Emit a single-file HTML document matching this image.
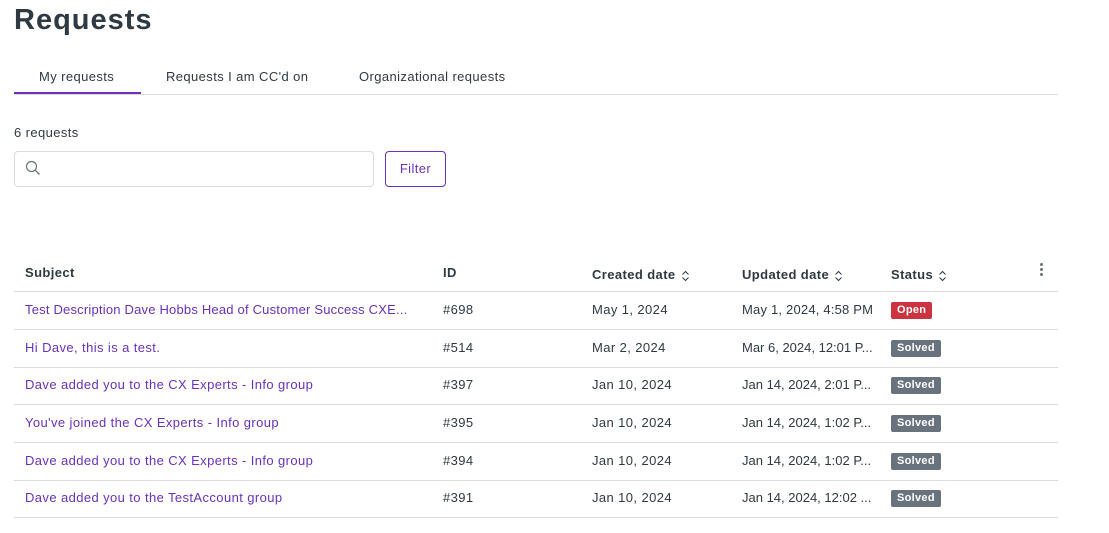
<!DOCTYPE html>
<html><head><style>
body{margin:0;width:1109px;height:533px;background:#fff;font-family:"Liberation Sans",sans-serif;color:#2f3941;position:relative;overflow:hidden}
.a{position:absolute;white-space:nowrap;letter-spacing:0.4px}
h1{position:absolute;left:14px;top:1px;margin:0;font-size:29px;font-weight:bold;color:#2f3941;line-height:38px;letter-spacing:1px}
.tab{font-size:13px;top:69px;color:#2f3941}
.hd{font-size:13px;font-weight:bold;top:265px}
.ln{position:absolute;left:14px;width:1044px;height:1px;background:#d8dcde}
.row{font-size:13px}
.lk{color:#6a32b8}
.b{position:absolute;left:891px;font-size:11px;font-weight:bold;color:#fff;padding:2px 6px;border-radius:2px;line-height:13px;letter-spacing:0.3px}
.sort{display:inline-block;vertical-align:middle;margin-left:5px}
</style></head><body>
<h1>Requests</h1>
<div class="a tab" style="left:39px">My requests</div>
<div class="a tab" style="left:166px">Requests I am CC'd on</div>
<div class="a tab" style="left:359px">Organizational requests</div>
<div class="ln" style="top:94px"></div>
<div style="position:absolute;left:14px;top:92px;width:127px;height:2px;background:#6a32b8"></div>
<div class="a" style="left:14px;top:125px;font-size:13px">6 requests</div>
<div style="position:absolute;left:14px;top:151px;width:358px;height:34px;border:1px solid #d8dcde;border-radius:4px"></div>
<svg style="position:absolute;left:25px;top:160px" width="16" height="16" viewBox="0 0 16 16"><circle cx="6.5" cy="6.5" r="5" fill="none" stroke="#68737d" stroke-width="1.2"/><path d="M10.2 10.2L14.5 14.5" stroke="#68737d" stroke-width="1.3"/></svg>
<div style="position:absolute;left:385px;top:151px;width:59px;height:34px;border:1px solid #6a32b8;border-radius:4px;color:#6a32b8;font-size:13px;text-align:center;line-height:34px;letter-spacing:0.4px">Filter</div>
<div class="a hd" style="left:25px">Subject</div>
<div class="a hd" style="left:443px">ID</div>
<div class="a hd" style="left:592px;top:267px">Created date<svg class="sort" width="9" height="12" viewBox="0 0 9 12"><path d="M1.5 4.5L4.5 1.5L7.5 4.5M1.5 7.5L4.5 10.5L7.5 7.5" fill="none" stroke="#2f3941" stroke-width="1"/></svg></div>
<div class="a hd" style="left:742px;top:267px">Updated date<svg class="sort" width="9" height="12" viewBox="0 0 9 12"><path d="M1.5 4.5L4.5 1.5L7.5 4.5M1.5 7.5L4.5 10.5L7.5 7.5" fill="none" stroke="#2f3941" stroke-width="1"/></svg></div>
<div class="a hd" style="left:891px;top:267px">Status<svg class="sort" width="9" height="12" viewBox="0 0 9 12"><path d="M1.5 4.5L4.5 1.5L7.5 4.5M1.5 7.5L4.5 10.5L7.5 7.5" fill="none" stroke="#2f3941" stroke-width="1"/></svg></div>
<div class="a" style="left:1040px;top:263px;width:3px">
<div style="width:3px;height:3px;border-radius:50%;background:#68737d;margin-bottom:2px"></div><div style="width:3px;height:3px;border-radius:50%;background:#68737d;margin-bottom:2px"></div><div style="width:3px;height:3px;border-radius:50%;background:#68737d"></div></div>
<div class="ln" style="top:291px"></div>
<div class="ln" style="top:329px"></div>
<div class="ln" style="top:367px"></div>
<div class="ln" style="top:404px"></div>
<div class="ln" style="top:442px"></div>
<div class="ln" style="top:480px"></div>
<div class="ln" style="top:517px"></div>

<div class="a row lk" style="left:25px;top:302px;letter-spacing:0.2px">Test Description Dave Hobbs Head of Customer Success CXE...</div>
<div class="a row" style="left:443px;top:302px">#698</div>
<div class="a row" style="left:592px;top:302px">May 1, 2024</div>
<div class="a row" style="left:742px;top:302px;letter-spacing:0.2px">May 1, 2024, 4:58 PM</div>
<div class="b" style="top:302px;background:#cc3340">Open</div>

<div class="a row lk" style="left:25px;top:340px">Hi Dave, this is a test.</div>
<div class="a row" style="left:443px;top:340px">#514</div>
<div class="a row" style="left:592px;top:340px">Mar 2, 2024</div>
<div class="a row" style="left:742px;top:340px;letter-spacing:0">Mar 6, 2024, 12:01 P...</div>
<div class="b" style="top:340px;background:#68737d">Solved</div>

<div class="a row lk" style="left:25px;top:377px">Dave added you to the CX Experts - Info group</div>
<div class="a row" style="left:443px;top:377px">#397</div>
<div class="a row" style="left:592px;top:377px">Jan 10, 2024</div>
<div class="a row" style="left:742px;top:377px;letter-spacing:0">Jan 14, 2024, 2:01 P...</div>
<div class="b" style="top:377px;background:#68737d">Solved</div>

<div class="a row lk" style="left:25px;top:415px">You've joined the CX Experts - Info group</div>
<div class="a row" style="left:443px;top:415px">#395</div>
<div class="a row" style="left:592px;top:415px">Jan 10, 2024</div>
<div class="a row" style="left:742px;top:415px;letter-spacing:0">Jan 14, 2024, 1:02 P...</div>
<div class="b" style="top:415px;background:#68737d">Solved</div>

<div class="a row lk" style="left:25px;top:453px">Dave added you to the CX Experts - Info group</div>
<div class="a row" style="left:443px;top:453px">#394</div>
<div class="a row" style="left:592px;top:453px">Jan 10, 2024</div>
<div class="a row" style="left:742px;top:453px;letter-spacing:0">Jan 14, 2024, 1:02 P...</div>
<div class="b" style="top:453px;background:#68737d">Solved</div>

<div class="a row lk" style="left:25px;top:490px">Dave added you to the TestAccount group</div>
<div class="a row" style="left:443px;top:490px">#391</div>
<div class="a row" style="left:592px;top:490px">Jan 10, 2024</div>
<div class="a row" style="left:742px;top:490px;letter-spacing:0">Jan 14, 2024, 12:02 ...</div>
<div class="b" style="top:490px;background:#68737d">Solved</div>
</body></html>
